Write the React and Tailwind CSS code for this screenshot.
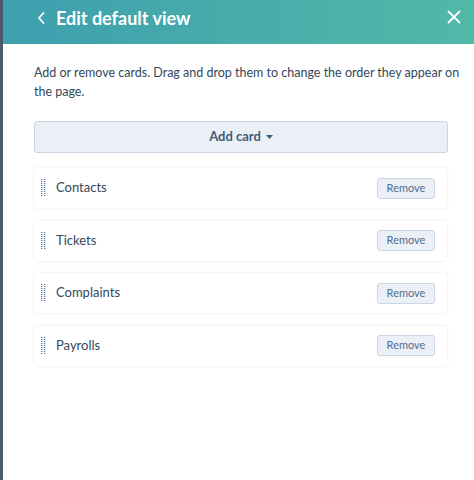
import React from 'react';

const cards = ['Contacts', 'Tickets', 'Complaints', 'Payrolls'];

const DragHandle = () => (
  <svg width="5" height="17" viewBox="0 0 5 17" className="shrink-0">
    {[0, 1, 2, 3, 4, 5, 6, 7, 8].map((i) => (
      <g key={i} fill="#516f90">
        <rect x="0" y={i * 2} width="1.3" height="1" />
        <rect x="3" y={i * 2} width="1.3" height="1" />
      </g>
    ))}
  </svg>
);

export default function App() {
  return (
    <div
      className="flex h-[480px] w-[474px] bg-white"
      style={{ fontFamily: 'Lato, "Noto Sans", sans-serif' }}
    >
      <div className="w-[3px] shrink-0 bg-[#4a5a6a]" />
      <div className="flex flex-1 flex-col">
        {/* Header */}
        <div className="flex h-[44px] items-center justify-between bg-gradient-to-r from-[#3e9fae] to-[#51b9a7] pb-[8px] pl-[33px] pr-[13px]">
          <div className="flex items-center gap-[10px]">
            <svg width="10" height="14" viewBox="0 0 10 14" fill="none">
              <path d="M7.5 2L3 7l4.5 5" stroke="white" strokeWidth="1.8" strokeLinecap="round" strokeLinejoin="round" />
            </svg>
            <h1 className="text-[18px] font-bold text-white">Edit default view</h1>
          </div>
          <svg width="14" height="14" viewBox="0 0 14 14" fill="none" className="mb-[2px]">
            <path d="M1.5 1.5l11 11M12.5 1.5l-11 11" stroke="white" strokeWidth="1.8" strokeLinecap="round" />
          </svg>
        </div>

        {/* Body */}
        <div className="flex flex-col pl-[31px] pr-[26px] pt-[19px]">
          <p className="mr-[-16px] text-[12.5px] leading-[19px] text-[#33475b]">
            Add or remove cards. Drag and drop them to change the order they appear on the page.
          </p>

          <button className="mt-[20px] flex h-[32px] w-full items-center justify-center gap-[5px] rounded-[3px] border border-[#cbd6e2] bg-[#eaf0f6] text-[13px] font-bold text-[#425b76]">
            Add card
            <svg width="7" height="4" viewBox="0 0 7 4">
              <path d="M0 0h7L3.5 4z" fill="#425b76" />
            </svg>
          </button>

          <div className="mt-[15px] flex flex-col gap-[12.5px]">
            {cards.map((card) => (
              <div
                key={card}
                className="mr-[1px] flex h-[40px] items-center justify-between rounded-[3px] bg-white pl-[7px] pr-[12px] shadow-[0_0_3px_rgba(45,62,80,0.12)]"
              >
                <div className="flex items-center gap-[10px] self-start pt-[10px]">
                  <DragHandle />
                  <span className="text-[13px] text-[#33475b]">{card}</span>
                </div>
                <button className="h-[21px] w-[58px] rounded-[3px] border border-[#cbd6e2] bg-[#eaf0f6] text-[11px] text-[#516f90]">
                  Remove
                </button>
              </div>
            ))}
          </div>
        </div>
      </div>
    </div>
  );
}
